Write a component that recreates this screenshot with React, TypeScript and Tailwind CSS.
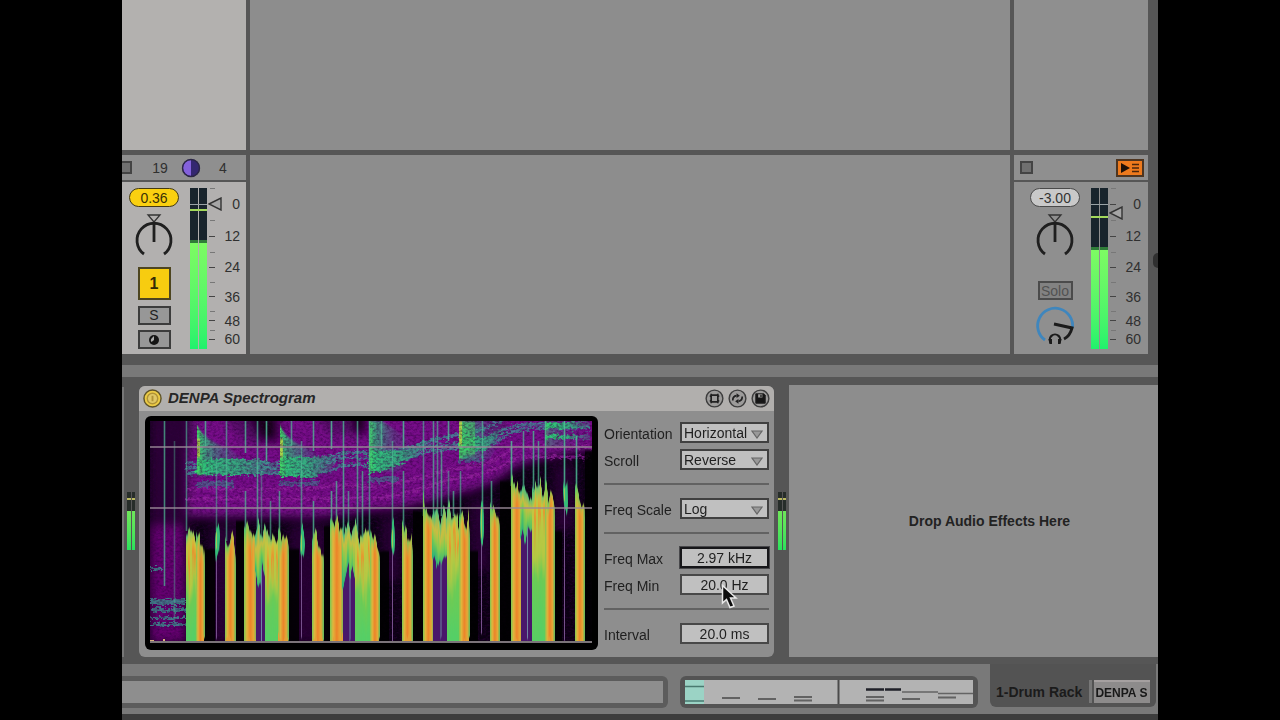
import type { ReactNode } from "react";

const SCALE = [
  { label: "0", height: "h-8" },
  { label: "12", height: "h-8" },
  { label: "24", height: "h-[30px]" },
  { label: "36", height: "h-[29px]" },
  { label: "48", height: "h-[19px]" },
  { label: "60", height: "h-[18px]" },
];

type Burst = {
  x: number;
  w: number;
  top: number;
  kind: "hot" | "mix" | "short" | "blob";
  end?: number;
};

const BURSTS: Burst[] = [
  { x: 36, w: 11, top: 112, kind: "mix" },
  { x: 46, w: 8, top: 120, kind: "hot" },
  { x: 65, w: 5, top: 108, kind: "blob", end: 140 },
  { x: 75, w: 10, top: 120, kind: "hot" },
  { x: 94, w: 12, top: 110, kind: "hot" },
  { x: 106, w: 10, top: 108, kind: "short", end: 162 },
  { x: 115, w: 14, top: 116, kind: "mix" },
  { x: 128, w: 10, top: 120, kind: "hot" },
  { x: 150, w: 5, top: 108, kind: "blob", end: 140 },
  { x: 162, w: 11, top: 120, kind: "hot" },
  { x: 180, w: 13, top: 104, kind: "hot" },
  { x: 193, w: 13, top: 108, kind: "short", end: 158 },
  { x: 205, w: 16, top: 112, kind: "mix" },
  { x: 220, w: 9, top: 118, kind: "hot" },
  { x: 241, w: 4, top: 100, kind: "blob", end: 132 },
  { x: 252, w: 10, top: 112, kind: "hot" },
  { x: 273, w: 10, top: 92, kind: "hot" },
  { x: 283, w: 15, top: 92, kind: "short", end: 142 },
  { x: 297, w: 13, top: 94, kind: "mix" },
  { x: 309, w: 10, top: 98, kind: "hot" },
  { x: 330, w: 4, top: 82, kind: "blob", end: 116 },
  { x: 340, w: 9, top: 92, kind: "hot" },
  { x: 361, w: 11, top: 64, kind: "hot" },
  { x: 371, w: 12, top: 66, kind: "short", end: 118 },
  { x: 382, w: 14, top: 68, kind: "mix" },
  { x: 395, w: 9, top: 74, kind: "hot" },
  { x: 413, w: 5, top: 58, kind: "blob", end: 96 },
  { x: 425, w: 9, top: 74, kind: "hot" },
];

// x, y1, y2, opacity
const HITS = [
  [14, 0, 165, 0.7], [24, 20, 200, 0.35], [36, 0, 110, 0.6], [55, 0, 25, 0.8],
  [66, 40, 110, 0.5], [76, 0, 120, 0.6], [95, 0, 32, 0.8], [95, 70, 112, 0.7],
  [107, 0, 118, 0.7], [111, 50, 118, 0.4], [116, 0, 40, 0.9], [120, 80, 120, 0.6],
  [129, 70, 120, 0.7], [141, 0, 25, 0.7], [151, 20, 120, 0.6], [163, 0, 30, 0.8],
  [163, 80, 125, 0.8], [181, 0, 28, 0.9], [181, 70, 105, 0.8], [186, 60, 110, 0.7],
  [193, 0, 120, 0.8], [198, 70, 110, 0.6], [207, 0, 120, 0.7], [212, 50, 120, 0.7],
  [219, 0, 120, 0.6], [231, 0, 28, 0.7], [242, 20, 110, 0.6], [253, 0, 28, 0.9],
  [253, 50, 120, 0.7], [273, 0, 95, 0.6], [283, 0, 95, 0.7], [287, 0, 95, 0.6],
  [291, 30, 95, 0.7], [298, 0, 20, 0.8], [298, 50, 95, 0.5], [303, 70, 95, 0.7],
  [310, 50, 95, 0.6], [332, 0, 90, 0.7], [341, 60, 95, 0.7], [361, 20, 65, 0.9],
  [373, 10, 70, 0.7], [383, 10, 70, 0.8], [388, 20, 70, 0.7], [395, 0, 75, 0.8],
  [414, 0, 66, 0.9], [426, 15, 75, 0.9],
];

const BANDS = [
  "M36 42 H130 M130 42 H160 Q175 40 186 34 Q205 30 219 32 Q250 32 280 20 Q300 14 320 12 Q340 8 365 -8",
  "M36 47 H130 M130 47 H160 Q175 44 188 38 Q205 35 219 38 Q250 36 280 25 Q300 23 325 22 Q340 22 352 10 Q366 2 395 3",
  "M36 52 H130 M130 53 H160 Q178 52 190 45 Q205 42 219 45 Q250 42 280 30 Q300 27 328 27 Q345 25 356 14 Q370 6 395 7 H440",
];

function Column({ burst }: { burst: Burst }) {
  const { x, w, top, kind, end = 222 } = burst;
  if (kind === "blob") {
    return (
      <g>
        <rect x={x + 1} y={end - 10} width="1" height={232 - end} fill="#75508b" />
        <ellipse cx={x + w / 2} cy={(top + end) / 2} rx={w / 2} ry={(end - top) / 2} fill="#35bd78" />
        <rect x={x + 1} y={top + 8} width="1" height={end - top - 16} fill="#9fcb5a" />
      </g>
    );
  }
  if (kind === "short") {
    return (
      <g>
        <rect x={x} y={end - 20} width={w} height={242 - end} fill="#49176b" />
        <rect x={x + w / 2} y={end - 12} width="1" height={234 - end} fill="#6f86a4" />
        <path
          d={`M${x - 1} ${top} L${x + w + 1} ${top + 3} V${end - 14} L${x + w - 3} ${end - 9} L${x + w / 2} ${end - 4} L${x - 1} ${end}Z`}
          fill="url(#shortFill)"
        />
      </g>
    );
  }
  const shape = `M${x} 222 V${top - 10} L${x + 2} ${top - 3} L${x + w - 3} ${top + 2} Q${x + w + 1} ${top + 6} ${x + w + 1} ${top + 20} V222Z`;
  if (kind === "mix") {
    return (
      <g>
        <path d={shape} fill="url(#mixFill)" />
        <rect x={x + 2} y={top + 10} width="2" height="50" fill="url(#flameFill)" />
        <rect x={x + 6} y={top + 8} width="3" height="44" fill="url(#flameFill)" />
        <rect x={x + w - 3} y={top + 10} width="2" height="40" fill="url(#flameFill)" />
      </g>
    );
  }
  return (
    <g>
      <path d={shape} fill="url(#hotFill)" />
      <path
        d={`M${x} ${top + 18} V${top - 10} L${x + 2} ${top - 3} L${x + w - 3} ${top + 2} Q${x + w + 1} ${top + 6} ${x + w + 1} ${top + 18}Z`}
        fill="url(#capFill)"
      />
    </g>
  );
}

function Spectrogram() {
  return (
    <svg
      viewBox="0 0 442 222"
      preserveAspectRatio="none"
      className="block h-[222px] w-full"
      role="img"
      aria-label="Spectrogram"
    >
      <defs>
        <filter id="grain" x="0" y="0" width="100%" height="100%">
          <feTurbulence type="fractalNoise" baseFrequency="0.3 0.5" numOctaves="3" seed="4" />
          <feColorMatrix values="0 0 0 0 0.03  0 0 0 0 0  0 0 0 0 0.05  1.8 0 0 0 -0.7" />
          <feGaussianBlur stdDeviation="0.4" />
        </filter>
        <filter id="rough" x="-5%" y="-20%" width="110%" height="140%">
          <feTurbulence type="fractalNoise" baseFrequency="0.25 0.4" numOctaves="2" seed="9" />
          <feColorMatrix values="1 0 0 0 0  0 1 0 0 0  0 0 1 0 0  0 0 0 0 1" result="noise" />
          <feDisplacementMap in="SourceGraphic" in2="noise" scale="8" xChannelSelector="R" yChannelSelector="G" />
          <feGaussianBlur stdDeviation="0.7" />
        </filter>
        <filter id="ragged" x="-5%" y="-15%" width="110%" height="115%" colorInterpolationFilters="sRGB">
          <feTurbulence type="fractalNoise" baseFrequency="0.28 0.02" numOctaves="2" seed="3" />
          <feColorMatrix values="0 0 0 0 0.5  0 1 0 0 0  0 0 0 0 0.5  0 0 0 0 1" result="noise" />
          <feDisplacementMap in="SourceGraphic" in2="noise" scale="42" xChannelSelector="R" yChannelSelector="G" />
          <feGaussianBlur stdDeviation="0.6 1" />
        </filter>
        <filter id="soft" x="-10%" y="-10%" width="120%" height="120%">
          <feGaussianBlur stdDeviation="0.7 1.2" />
        </filter>
        <filter id="haze" x="-10%" y="-10%" width="120%" height="120%">
          <feGaussianBlur stdDeviation="5" />
        </filter>
        <linearGradient id="onset" x1="0" x2="1" y1="0" y2="0">
          <stop offset="0" stopColor="#45d765" />
          <stop offset="0.12" stopColor="#2fc07b" stopOpacity="0.8" />
          <stop offset="0.5" stopColor="#3f8f8a" stopOpacity="0.3" />
          <stop offset="1" stopColor="#5c2b82" stopOpacity="0" />
        </linearGradient>
        <linearGradient id="band" x1="0" x2="1" y1="0" y2="0">
          <stop offset="0" stopColor="#2fd272" />
          <stop offset="0.5" stopColor="#2dc07b" stopOpacity="0.9" />
          <stop offset="1" stopColor="#3b9a8c" stopOpacity="0.3" />
        </linearGradient>
        <linearGradient id="hotFill" x1="0" x2="1" y1="0" y2="0">
          <stop offset="0" stopColor="#7cc853" />
          <stop offset="0.22" stopColor="#e0b53c" />
          <stop offset="0.48" stopColor="#ec8329" />
          <stop offset="0.75" stopColor="#e5a836" />
          <stop offset="1" stopColor="#58bd62" />
        </linearGradient>
        <linearGradient id="capFill" x1="0" x2="0" y1="0" y2="1">
          <stop offset="0" stopColor="#36bd80" />
          <stop offset="0.45" stopColor="#7fca55" stopOpacity="0.85" />
          <stop offset="1" stopColor="#d9bf3e" stopOpacity="0" />
        </linearGradient>
        <linearGradient id="mixFill" x1="0" x2="0" y1="0" y2="1">
          <stop offset="0" stopColor="#3cc18a" />
          <stop offset="0.16" stopColor="#c3c641" />
          <stop offset="0.42" stopColor="#b5c843" />
          <stop offset="0.62" stopColor="#6ccb55" />
          <stop offset="1" stopColor="#55cf66" />
        </linearGradient>
        <linearGradient id="flameFill" x1="0" x2="0" y1="0" y2="1">
          <stop offset="0" stopColor="#e9b032" stopOpacity="0.3" />
          <stop offset="0.4" stopColor="#e6962f" />
          <stop offset="1" stopColor="#a5c945" stopOpacity="0" />
        </linearGradient>
        <linearGradient id="shortFill" x1="0" x2="0" y1="0" y2="1">
          <stop offset="0" stopColor="#3ec084" />
          <stop offset="0.3" stopColor="#ccbd40" />
          <stop offset="0.6" stopColor="#7fcb50" />
          <stop offset="1" stopColor="#23b27c" />
        </linearGradient>
      </defs>

      <rect width="442" height="222" fill="#0b0112" />

      <g filter="url(#haze)">
        <rect x="0" y="-10" width="36" height="130" fill="#2a0436" />
        <rect x="0" y="105" width="36" height="117" fill="#65066f" />
        <path
          d="M38 -10 H450 V28 Q400 34 365 46 Q340 68 310 72 Q260 88 219 90 Q180 98 130 96 H38Z"
          fill="#78078a"
        />
        <path d="M38 -14 H46 V26 H38Z M62 -14 H100 L128 22 H96Z M160 -10 H215 V14 H180Z M330 14 L352 -10 V10Z" fill="#550866" />
        <path d="M60 104 H95 V222 H60Z M140 104 H178 V222 H140Z M232 96 H250 V160 H232Z M320 78 H340 V150 H320Z M404 44 H424 V110 H404Z" fill="#2b0438" opacity="0.8" />
        <path d="M96 -8 H130 V22 H112Z M200 -8 H218 V14 H204Z" fill="#120018" />
      </g>

      <g filter="url(#rough)">
        <g fill="none" stroke="#92209c" strokeWidth="3" opacity="0.8">
          <path d="M36 68 H160 Q190 62 219 66 Q260 62 300 48 Q340 46 366 26 H440" />
          <path d="M36 78 H160 Q190 76 219 78 Q260 74 300 58 Q340 56 366 36 H440" />
        </g>
        {BANDS.map((d) => (
          <path key={d} d={d} fill="none" stroke="#448a98" strokeWidth="3" opacity="0.85" />
        ))}
        <path d="M47 38 H110 L128 44 V54 H47Z" fill="url(#band)" />
        <path d="M130 36 H160 L186 34 V44 L165 56 H130Z" fill="url(#band)" />
        <path d="M219 30 L250 30 L282 18 Q260 46 219 52Z" fill="url(#band)" />
        <path d="M309 16 H335 L358 4 Q345 20 336 30 H309Z" fill="url(#band)" />
        <path d="M395 1 H440 V8 H395Z M395 14 H440 V18 H395Z" fill="url(#band)" />
        <path d="M47 60 H84 V66 H47Z M130 60 H168 V65 H130Z M219 56 H250 V61 H219Z M309 37 H335 V41 H309Z" fill="#41798f" opacity="0.65" />
        <path d="M0 146 H14 V150 H0Z M0 178 H36 V184 H0Z M0 187 H36 V191 H0Z M0 196 H36 V198 H0Z M0 202 H36 V205 H0Z" fill="#3b9490" opacity="0.8" />
      </g>

      <g filter="url(#soft)">
        <path d="M47 4 Q54 20 80 28 L112 54 H47Z" fill="url(#onset)" />
        <path d="M130 4 Q136 20 160 28 L190 54 H130Z" fill="url(#onset)" />
        <path d="M219 0 H232 L270 26 L250 50 H219Z" fill="url(#onset)" />
        <path d="M309 0 H362 L340 38 H309Z" fill="url(#onset)" />
        <path d="M309 0 H325 V34 H309Z" fill="#45cf62" opacity="0.6" />
        <path d="M395 0 H440 V26 H395Z" fill="url(#onset)" opacity="0.5" />
        <path d="M47 18 H50 V36 H47Z M130 18 H133 V36 H130Z M309 0 H312 V24 H309Z" fill="#b0d548" opacity="0.9" />
      </g>

      <rect width="442" height="222" filter="url(#grain)" opacity="0.7" />

      <path d="M54 128 H65 V222 H54Z M86 100 H94 V222 H86Z M138 128 H149 V222 H138Z M174 105 H180 V222 H174Z M230 130 H239 V222 H230Z M263 90 H273 V222 H263Z M319 130 H328 V222 H319Z M350 60 H361 V222 H350Z M405 110 H412 V222 H405Z M435 30 H442 V222 H435Z" fill="#030006" opacity="0.85" filter="url(#soft)" />

      {HITS.map(([x, y1, y2, o]) => (
        <rect key={`${x}-${y1}`} x={x} y={y1} width="1" height={y2 - y1} fill="#5fc79a" opacity={o * 0.85} />
      ))}
      {HITS.map(([x, y1, y2, o]) => (
        <rect key={`${x}-${y1}`} x={x - 1} y={y1} width="3" height={y2 - y1} fill="#3ca98c" opacity={o / 3} />
      ))}

      <g filter="url(#ragged)">
        {BURSTS.map((b) => (
          <Column key={b.x} burst={b} />
        ))}
        <path d="M36 222 h11 v14 h-11z M115 222 h14 v14 h-14z M205 222 h16 v14 h-16z M297 222 h13 v14 h-13z M382 222 h14 v14 h-14z" fill="#55cf66" />
        <path d="M46 222 h8 v14 h-8z M75 222 h10 v14 h-10z M94 222 h12 v14 h-12z M128 222 h10 v14 h-10z M162 222 h11 v14 h-11z M180 222 h13 v14 h-13z M220 222 h9 v14 h-9z M252 222 h10 v14 h-10z M273 222 h10 v14 h-10z M309 222 h10 v14 h-10z M340 222 h9 v14 h-9z M361 222 h11 v14 h-11z M395 222 h9 v14 h-9z M425 222 h9 v14 h-9z" fill="#e5a036" />
        <path d="M106 222 h9 v14 h-9z M193 222 h12 v14 h-12z M283 222 h14 v14 h-14z M371 222 h11 v14 h-11z" fill="#49176b" />
      </g>

      <path d="M0 219 H4 V222 H0Z M13 218 H15 V220 H36 V222 H13Z" fill="#d9b07c" />
      <path d="M0 26 H442 M0 87 H442" stroke="#9a8a98" strokeWidth="2" opacity="0.7" />
      <path d="M0 221 H442" stroke="#7b7479" strokeWidth="2" />
    </svg>
  );
}

function PanKnob() {
  return (
    <svg viewBox="0 0 44 50" className="mt-1 h-[50px] w-11" role="img" aria-label="Pan">
      <path d="M16 4 H28 L22 11Z" fill="none" stroke="#333" strokeWidth="1.3" />
      <path d="M12 43 A17 17 0 1 1 32 43" fill="none" stroke="#1f1f1f" strokeWidth="2.8" />
      <path d="M22 12 V31" stroke="#1f1f1f" strokeWidth="2.8" />
    </svg>
  );
}

function CueKnob() {
  return (
    <svg viewBox="0 0 44 44" className="mt-[3px] h-11 w-11" role="img" aria-label="Cue volume">
      <path d="M12 37 A17.500 17.500 0 1 1 39.500 25" fill="none" stroke="#3f86bd" strokeWidth="2.8" />
      <path d="M21 21 L39 25 Q37 33 31 36" fill="none" stroke="#1b1b1b" strokeWidth="3" />
      <path d="M18 40 A5.200 5.200 0 1 1 26 40" fill="none" stroke="#1b1b1b" strokeWidth="2.2" />
      <path d="M15.500 36 h3.500 v5 h-2.500z M25 36 h3.500 l-1 5 h-2.500z" fill="#1b1b1b" />
    </svg>
  );
}

type MeterProps = {
  dark: string;
  peak: string;
  fader: string;
};

function Meter({ dark, peak, fader }: MeterProps) {
  return (
    <div className="relative flex flex-1">
      <div className="relative flex h-[161px] gap-px">
        {[0, 1].map((n) => (
          <div key={n} className="flex w-2 flex-col bg-[#18242c]">
            <div className={dark} />
            <div className="h-[3px] bg-[#2f7d38]" />
            <div className="flex-1 bg-linear-to-b from-[#7dfb63] to-[#1df26c]" />
          </div>
        ))}
        <div className="absolute top-4 h-px w-full bg-[#9aa3a6]" />
        <div className={`absolute h-[2px] w-full bg-[#a3d95b] ${peak}`} />
      </div>
      <div className="ml-[2px] flex-1">
        {SCALE.map((s) => (
          <div key={s.label} className={`relative flex items-center justify-between ${s.height}`}>
            <span className="absolute top-0 left-px h-px w-[5px] bg-[#777]" />
            <span className="h-px w-[6px] bg-[#444]" />
            <span className="text-sm leading-4 text-[#303030]">{s.label}</span>
          </div>
        ))}
      </div>
      <svg viewBox="0 0 14 14" className={`absolute left-[18px] h-[14px] w-[14px] ${fader}`} aria-hidden="true">
        <path d="M1 7 L13 1 V13Z" fill="#a5a5a5" stroke="#333" strokeWidth="1.4" />
      </svg>
    </div>
  );
}

function LeftTrack() {
  return (
    <div className="flex w-[124px] flex-col">
      <div className="flex h-[25px] items-center bg-[#8f8f8f] text-sm leading-4 text-[#303030]">
        <button aria-label="Stop clip" className="h-[13px] w-[10px] border-2 border-l-0 border-[#444] bg-[#707070]" />
        <span className="ml-5 w-4 text-center">19</span>
        <svg viewBox="0 0 20 20" className="ml-[13px] size-5" aria-hidden="true">
          <circle cx="10" cy="10" r="9" fill="#342770" />
          <path d="M10 2 A8 8 0 0 0 10 18Z" fill="#8461dc" />
          <circle cx="10" cy="10" r="8.500" fill="none" stroke="#2c2745" strokeWidth="1.4" />
        </svg>
        <span className="ml-[18px]">4</span>
      </div>
      <div className="mt-[2px] flex h-[172px] gap-[11px] bg-[#b2b0af] pt-[6px] pr-[6px] pl-[7px]">
        <div className="flex w-[50px] flex-col items-center">
          <input
            aria-label="Track volume"
            defaultValue="0.36"
            className="h-[19px] w-[50px] rounded-full border border-[#443a10] bg-[#fad010] text-center text-sm text-[#3b3205]"
          />
          <PanKnob />
          <button className="mt-[6px] h-[33px] w-[33px] border-2 border-[#4d4520] bg-[#f7cc10] text-base leading-4 font-bold text-[#332b05]">
            1
          </button>
          <button className="mt-[6px] h-[19px] w-[33px] border-2 border-[#3c3c3c] bg-[#979797] text-sm leading-[15px] text-[#222]">
            S
          </button>
          <button aria-label="Arm" className="mt-[5px] flex h-[19px] w-[33px] items-center justify-center border-2 border-[#3c3c3c] bg-[#979797]">
            <svg viewBox="0 0 12 12" className="size-3" aria-hidden="true">
              <circle cx="6" cy="6" r="5" fill="#151515" />
              <path d="M6 2 V6 L3.500 8 A3 3 0 0 1 4 4Z" fill="#aaa" />
            </svg>
          </button>
        </div>
        <Meter dark="h-[52px]" peak="top-[21px]" fader="top-[9px]" />
      </div>
    </div>
  );
}

function MasterTrack() {
  return (
    <div className="flex w-[134px] flex-col">
      <div className="flex h-[25px] items-center justify-between bg-[#8f8f8f] pr-1 pl-[6px]">
        <button aria-label="Stop all clips" className="size-[13px] border-2 border-[#444] bg-[#707070]" />
        <button aria-label="Back to arrangement" className="flex h-[18px] w-7 items-center justify-center border-2 border-[#4e3520] bg-[#ee7a1d]">
          <svg viewBox="0 0 22 12" className="h-3 w-[22px]" aria-hidden="true">
            <path d="M2 1 L11 6 L2 11Z" fill="#1d1008" />
            <path d="M13 2.500 H20 M13 6 H20 M13 9.500 H20" stroke="#4b260b" strokeWidth="1.600" />
          </svg>
        </button>
      </div>
      <div className="mt-[2px] flex h-[172px] gap-[11px] bg-[#8f8f8f] pt-[6px] pr-[7px] pl-4">
        <div className="flex w-[50px] flex-col items-center">
          <input
            aria-label="Master volume"
            defaultValue="-3.00"
            className="h-[19px] w-[50px] rounded-full border border-[#4a4a4a] bg-[#c9c9c9] text-center text-sm text-[#333]"
          />
          <PanKnob />
          <button className="mt-5 flex h-[19px] w-[35px] items-center justify-center border-2 border-[#4b4b4b] bg-[#828282] text-sm leading-4 text-[#525252]">
            Solo
          </button>
          <CueKnob />
        </div>
        <Meter dark="h-[59px]" peak="top-[28px]" fader="top-[18px]" />
      </div>
    </div>
  );
}

function DeviceMeter() {
  return (
    <div className="mt-[107px] flex h-[58px] w-2 shrink-0 gap-px" aria-hidden="true">
      {[0, 1].map((n) => (
        <div key={n} className="flex flex-1 flex-col bg-[#272d2a]">
          <div className="mt-[6px] h-[2px] bg-[#b9b860]" />
          <div className="mt-[11px] flex-1 bg-linear-to-b from-[#6ee65a] to-[#27e35c]" />
        </div>
      ))}
    </div>
  );
}

function Field({ id, label, children }: { id: string; label: string; children: ReactNode }) {
  return (
    <div className="relative flex h-[21px] items-center justify-between">
      <label htmlFor={id} className="pt-[3px] text-sm leading-4 whitespace-nowrap text-[#1f1f1f]">
        {label}
      </label>
      {children}
    </div>
  );
}

function Dropdown({ id, label, value }: { id: string; label: string; value: string }) {
  return (
    <Field id={id} label={label}>
      <select
        id={id}
        className="h-[21px] w-[89px] appearance-none border-2 border-[#404040] bg-[#c0c0c0] pl-[2px] text-sm leading-4 text-[#1f1f1f]"
      >
        <option>{value}</option>
      </select>
      <svg viewBox="0 0 12 9" className="pointer-events-none absolute top-[8px] right-[6px] h-[9px] w-3" aria-hidden="true">
        <path d="M1 1 H11 L6 8Z" fill="#999" stroke="#666" strokeWidth="1.200" />
      </svg>
    </Field>
  );
}

function NumberBox({ id, label, value, focused }: { id: string; label: string; value: string; focused?: boolean }) {
  return (
    <Field id={id} label={label}>
      <input
        id={id}
        defaultValue={value}
        className={`h-[21px] w-[89px] border-2 bg-[#c0c0c0] text-center text-sm leading-4 text-[#1f1f1f] ${
          focused ? "border-[#161619] outline outline-[#48484b]" : "border-[#484848]"
        }`}
      />
    </Field>
  );
}

function Divider() {
  return <hr className="mt-[13px] mb-[13px] border-t-2 border-[#626262]" />;
}

function HeaderIcon({ label, children }: { label: string; children: ReactNode }) {
  return (
    <button aria-label={label} className="size-[19px]">
      <svg viewBox="0 0 20 20" className="size-[19px]" fill="none" stroke="#222" aria-hidden="true">
        <circle cx="10" cy="10" r="8.800" fill="#9c9b9a" stroke="#3e3e3e" strokeWidth="1.500" />
        {children}
      </svg>
    </button>
  );
}

function SpectrogramDevice() {
  return (
    <section className="ml-1 flex w-[635px] flex-col overflow-hidden rounded-md bg-[#8e8e8e]">
      <header className="flex h-[25px] items-center bg-[#b1afad] pr-1 pl-1">
        <button aria-label="Device on" className="size-[19px]">
          <svg viewBox="0 0 20 20" className="size-[19px]" aria-hidden="true">
            <circle cx="10" cy="10" r="9" fill="#eccb45" stroke="#5e5328" strokeWidth="1.500" />
            <circle cx="10" cy="10" r="5.500" fill="#e0c867" stroke="#b09337" strokeWidth="1.500" />
            <path d="M10 7 V13" stroke="#b09337" strokeWidth="2" />
          </svg>
        </button>
        <h2 className="ml-[6px] flex-1 pb-[2px] text-[15px] leading-5 font-bold text-[#262626] italic">
          DENPA Spectrogram
        </h2>
        <div className="flex gap-1">
          <HeaderIcon label="Edit">
            <path d="M6.500 6.500 H13.500 M6.500 13.500 H13.500 M6.500 5 V15 M13.500 5 V15" strokeWidth="1.800" />
            <path d="M5 7.500 h2 M13 7.500 h2 M5 12.500 h2 M13 12.500 h2" strokeWidth="1.600" />
          </HeaderIcon>
          <HeaderIcon label="Hot-swap">
            <path d="M5 12 Q5 7.500 9 7 M15 8 Q15 12.500 11 13" strokeWidth="1.800" />
            <path d="M9 4.500 L12.500 7 L9 9.500Z M11 10.500 L7.500 13 L11 15.500Z" fill="#222" stroke="none" />
          </HeaderIcon>
          <HeaderIcon label="Save preset">
            <path d="M5 5 H13.500 L15 6.500 V15 H5Z" fill="#151515" strokeWidth="1" />
            <path d="M7.500 5.500 H12 V9 H7.500Z" fill="#9c9b9a" stroke="none" />
            <path d="M10.500 6 V8.500" strokeWidth="1.500" />
          </HeaderIcon>
        </div>
      </header>
      <div className="flex flex-1 gap-[6px] pt-[5px] pr-[5px] pb-[7px] pl-[6px]">
        <div className="flex-1 rounded-md bg-black p-[5px] pr-[6px]">
          <Spectrogram />
        </div>
        <div className="w-[165px] pt-[6px]">
          <div className="flex flex-col gap-[6px]">
            <Dropdown id="orientation" label="Orientation" value="Horizontal" />
            <Dropdown id="scroll" label="Scroll" value="Reverse" />
          </div>
          <Divider />
          <Dropdown id="freq-scale" label="Freq Scale" value="Log" />
          <Divider />
          <div className="relative flex flex-col gap-[6px]">
            <NumberBox id="freq-max" label="Freq Max" value="2.97 kHz" focused />
            <NumberBox id="freq-min" label="Freq Min" value="20.0 Hz" />
            <svg viewBox="0 0 18 26" className="absolute top-[37px] left-[117px] h-[26px] w-[18px]" aria-hidden="true">
              <path
                d="M1.500 1.500 V19 L5.500 15.500 L9 23.500 L13 22 L9.500 14 H15Z"
                fill="#0c0c0c"
                stroke="#e8e8e8"
                strokeWidth="1.500"
              />
            </svg>
          </div>
          <Divider />
          <NumberBox id="interval" label="Interval" value="20.0 ms" />
        </div>
      </div>
    </section>
  );
}

function ClipOverview() {
  return (
    <div className="h-8 w-[298px] rounded-md bg-[#545454] p-[4px] px-[5px]">
      <svg viewBox="0 0 288 24" preserveAspectRatio="none" className="block h-6 w-full" role="img" aria-label="Clip overview">
        <rect width="288" height="24" fill="#b3b3b3" />
        <rect width="19" height="24" fill="#9bd3c5" />
        <path d="M0 6.500 H19 M0 21 H19" stroke="#4a7a70" strokeWidth="1.500" />
        <path d="M37 18 H55 M73 19 H91 M109 17 H127 M109 20.500 H127 M181 17 H199 M181 20.500 H199 M217 19 H235 M253 17.500 H271" stroke="#626262" strokeWidth="2" />
        <path d="M217 12 H253 M253 13.500 H288" stroke="#646464" strokeWidth="1.500" />
        <path d="M181 9.500 H199 M200 9.500 H216" stroke="#1f2028" strokeWidth="2.500" />
        <path d="M153.500 0 V24" stroke="#4b4b4b" strokeWidth="2" />
      </svg>
    </div>
  );
}

export default function App() {
  return (
    <main className="min-h-screen bg-black px-[122px] font-['Liberation_Sans',Arial,sans-serif]">
      <div className="flex min-h-screen flex-col overflow-hidden bg-[#565656]">
        <div className="relative pr-[10px]">
          <div className="flex h-[150px] gap-1">
            <div className="w-[124px] bg-[#b3b1af]" />
            <div className="flex-1 bg-[#8d8d8d]" />
            <div className="w-[134px] bg-[#8f8f8f]" />
          </div>
          <div className="mt-[5px] flex gap-1">
            <LeftTrack />
            <div className="flex-1 bg-[#8d8d8d]" />
            <MasterTrack />
          </div>
          <div className="absolute top-[253px] right-0 h-[15px] w-[5px] rounded-l-full bg-[#303030]" />
        </div>

        <div className="mt-[11px] h-3 bg-[#797979]" />

        <div className="mt-2 flex">
          <div className="mt-[2px] w-[2px] bg-[#777]" />
          <div className="ml-[3px] flex">
            <DeviceMeter />
          </div>
          <div className="flex pt-px">
            <SpectrogramDevice />
          </div>
          <div className="ml-1 flex">
            <DeviceMeter />
          </div>
          <div className="ml-[3px] flex h-[272px] flex-1 items-center justify-center bg-[#8d8d8d] text-sm font-bold text-[#222]">
            <p className="pl-8">Drop Audio Effects Here</p>
          </div>
        </div>

        <footer className="mt-[7px] flex h-[50px] bg-[#797979]">
          <div className="flex flex-1 gap-3 pt-3">
            <div className="h-8 flex-1 rounded-r-md bg-[#5c5c5c] py-[5px] pr-[5px]">
              <div className="h-full bg-[#8e8e8e]" />
            </div>
            <ClipOverview />
          </div>
          <div className="mr-[2px] ml-3 flex h-[43px] w-[166px] items-center gap-[7px] rounded-b-md bg-[#535353] pt-3 pl-[6px]">
            <span className="text-sm font-bold whitespace-nowrap text-[#1b1b1b]">1-Drum Rack</span>
            <div className="flex flex-1 gap-[2px] pr-[6px]">
              <div className="h-[23px] w-[3px] bg-[#777]" />
              <button className="h-[23px] flex-1 overflow-hidden border-t-2 border-[#a5a0a0] bg-[#8d8b8b] pl-px text-left text-xs leading-5 font-bold whitespace-nowrap text-[#181818]">
                DENPA S
              </button>
            </div>
          </div>
        </footer>
        <div className="flex-1 bg-[#3d3d3d]" />
      </div>
    </main>
  );
}
